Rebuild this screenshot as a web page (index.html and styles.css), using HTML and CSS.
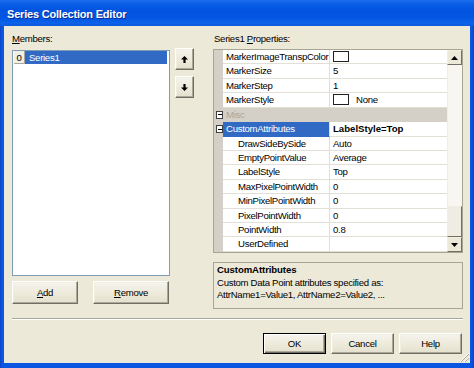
FILE: index.html
```html
<!DOCTYPE html>
<html>
<head>
<meta charset="utf-8">
<link rel="stylesheet" href="styles.css">
</head>
<body>
<div class="window">
  <div class="titlebar">Series Collection Editor</div>
  <div class="client">
    <div class="main">
      <div class="col-left">
        <div class="label"><u>M</u>embers:</div>
        <div class="list">
          <div class="list-row"><span class="idx">0</span><span class="item sel">Series1</span></div>
        </div>
        <div class="left-buttons">
          <button class="btn btn-add"><u>A</u>dd</button>
          <button class="btn btn-remove"><u>R</u>emove</button>
        </div>
      </div>
      <div class="col-arrows">
        <button class="btn arrow"><svg width="7" height="7" viewBox="0 0 7 7"><path d="M3.5 0 L7 3.5 H4.6 V7 H2.4 V3.5 H0 Z" fill="#000"/></svg></button>
        <button class="btn arrow"><svg width="7" height="7" viewBox="0 0 7 7"><path d="M3.5 7 L7 3.5 H4.6 V0 H2.4 V3.5 H0 Z" fill="#000"/></svg></button>
      </div>
      <div class="col-right">
        <div class="label label-right">Series1 <u>P</u>roperties:</div>
        <div class="pgrid">
          <div class="pg-rows">
            <div class="pg-row"><span class="pg-m"></span><span class="pg-n">MarkerImageTranspColor</span><span class="pg-v"><i class="swatch"></i></span></div>
            <div class="pg-row"><span class="pg-m"></span><span class="pg-n">MarkerSize</span><span class="pg-v">5</span></div>
            <div class="pg-row"><span class="pg-m"></span><span class="pg-n">MarkerStep</span><span class="pg-v">1</span></div>
            <div class="pg-row"><span class="pg-m"></span><span class="pg-n">MarkerStyle</span><span class="pg-v"><i class="swatch"></i><span class="after-swatch">None</span></span></div>
            <div class="pg-row pg-cat"><span class="pg-m"><i class="minus"></i></span><span class="pg-c">Misc</span></div>
            <div class="pg-row"><span class="pg-m"><i class="minus"></i></span><span class="pg-n pg-sel">CustomAttributes</span><span class="pg-v pg-bold">LabelStyle=Top</span></div>
            <div class="pg-row"><span class="pg-m"></span><span class="pg-n pg-child">DrawSideBySide</span><span class="pg-v">Auto</span></div>
            <div class="pg-row"><span class="pg-m"></span><span class="pg-n pg-child">EmptyPointValue</span><span class="pg-v">Average</span></div>
            <div class="pg-row"><span class="pg-m"></span><span class="pg-n pg-child">LabelStyle</span><span class="pg-v">Top</span></div>
            <div class="pg-row"><span class="pg-m"></span><span class="pg-n pg-child">MaxPixelPointWidth</span><span class="pg-v">0</span></div>
            <div class="pg-row"><span class="pg-m"></span><span class="pg-n pg-child">MinPixelPointWidth</span><span class="pg-v">0</span></div>
            <div class="pg-row"><span class="pg-m"></span><span class="pg-n pg-child">PixelPointWidth</span><span class="pg-v">0</span></div>
            <div class="pg-row"><span class="pg-m"></span><span class="pg-n pg-child">PointWidth</span><span class="pg-v">0.8</span></div>
            <div class="pg-row"><span class="pg-m"></span><span class="pg-n pg-child">UserDefined</span><span class="pg-v"></span></div>
          </div>
          <div class="vscroll">
            <div class="sb-btn"><svg width="7" height="4" viewBox="0 0 7 4"><path d="M3.5 0 L7 4 H0 Z" fill="#000"/></svg></div>
            <div class="sb-track"></div>
            <div class="sb-thumb"></div>
            <div class="sb-btn"><svg width="7" height="4" viewBox="0 0 7 4"><path d="M0 0 H7 L3.5 4 Z" fill="#000"/></svg></div>
          </div>
        </div>
        <div class="desc">
          <div class="desc-title">CustomAttributes</div>
          <div class="desc-text">Custom Data Point attributes specified as:<br>AttrName1=Value1, AttrName2=Value2, ...</div>
        </div>
      </div>
    </div>
    <div class="separator"></div>
    <div class="footer">
      <button class="btn btn-foot btn-default">OK</button>
      <button class="btn btn-foot">Cancel</button>
      <button class="btn btn-foot">Help</button>
    </div>
    <svg class="grip" width="11" height="11" viewBox="0 0 11 11">
      <path d="M10 1 L1 10 M10 5 L5 10 M10 9 L9 10" stroke="#fff" stroke-width="1"/>
      <path d="M10 2 L2 10 M10 6 L6 10" stroke="#ACA899" stroke-width="1"/>
    </svg>
  </div>
</div>
</body>
</html>
```

FILE: styles.css
```css
html, body {
  margin: 0;
  padding: 0;
}
body {
  width: 474px;
  height: 368px;
  overflow: hidden;
  font-family: "Liberation Sans", Arial, sans-serif;
  font-size: 9.6px;
  letter-spacing: -0.3px;
  color: #000;
}
.window {
  width: 474px;
  height: 368px;
  display: flex;
  flex-direction: column;
  background: linear-gradient(to right, #0A45C8 0, #0B56E0 2px, #0B56E0 471px, #0A45C8 474px);
}
.titlebar {
  height: 26px;
  box-sizing: border-box;
  padding: 2px 0 0 7px;
  line-height: 24px;
  color: #fff;
  font-size: 11px;
  font-weight: bold;
  letter-spacing: -0.2px;
  text-shadow: 1px 1px 0 #0A2A9A;
  background: linear-gradient(to bottom, #1E6EEE 0, #0A5EE6 4px, #0254E0 10px, #0356E2 18px, #0B62EA 23px, #0D5ADB 26px);
}
.client {
  position: relative;
  margin: 0 4px 5px 4px;
  flex: 1;
  background: #ECE9D8;
  padding: 6px 7px 0 8px;
  display: flex;
  flex-direction: column;
}
.main {
  display: flex;
  height: 277px;
}
.label {
  height: 18px;
  line-height: 14px;
}
.label-right {
  height: 17px;
  padding-left: 1px;
}
.col-left {
  width: 158px;
  display: flex;
  flex-direction: column;
}
.list {
  height: 226px;
  box-sizing: border-box;
  border: 1px solid #7F9DB9;
  background: #fff;
  padding: 0 2px 0 1px;
}
.list-row {
  display: flex;
  height: 13px;
}
.idx {
  width: 11px;
  box-sizing: border-box;
  background: #F1EFE2;
  border-right: 1px solid #ACA899;
  border-bottom: 1px solid #ACA899;
  text-align: center;
  line-height: 13px;
}
.item {
  flex: 1;
  padding-left: 4px;
  line-height: 13px;
}
.sel {
  background: #316AC5;
  color: #fff;
}
.left-buttons {
  display: flex;
  justify-content: space-between;
  margin-top: 5px;
  padding-right: 1px;
}
.btn {
  font-family: "Liberation Sans", Arial, sans-serif;
  font-size: 9.6px;
  letter-spacing: -0.3px;
  color: #000;
  margin: 0;
  padding: 0;
  box-sizing: border-box;
  border: 1px solid;
  border-color: #fff #716F64 #716F64 #fff;
  box-shadow: inset -1px -1px 0 #ACA899, inset 1px 1px 0 #F1EFE2;
  background: linear-gradient(#F5F4EE, #ECE9D8 60%, #E3E0CF);
}
.btn-add {
  width: 66px;
  height: 23px;
}
.btn-remove {
  width: 76px;
  height: 23px;
}
.col-arrows {
  width: 19px;
  margin-left: 5px;
  padding-top: 16px;
  display: flex;
  flex-direction: column;
  gap: 6px;
}
.arrow {
  width: 19px;
  height: 22px;
  display: flex;
  align-items: center;
  justify-content: center;
}
.col-right {
  width: 250px;
  margin-left: 19px;
  display: flex;
  flex-direction: column;
}
.pgrid {
  height: 204px;
  box-sizing: border-box;
  border: 1px solid #A9A594;
  background: #fff;
  display: flex;
  overflow: hidden;
}
.pg-rows {
  width: 233px;
  background: linear-gradient(to right, #D4D0C8 9px, #fff 9px);
}
.pg-row {
  height: 14.43px;
  display: grid;
  grid-template-columns: 9px 107px 117px;
}
.pg-m {
  display: flex;
  align-items: center;
  justify-content: center;
}
.pg-n, .pg-v, .pg-c {
  box-sizing: border-box;
  border-bottom: 1px solid #E2E0D6;
  white-space: nowrap;
  overflow: hidden;
  line-height: 13.4px;
}
.pg-n {
  border-right: 1px solid #E2E0D6;
  padding-left: 3px;
}
.pg-v {
  padding-left: 3px;
  display: flex;
  align-items: center;
}
.pg-child {
  padding-left: 15px;
}
.pg-sel {
  background: #316AC5;
  color: #fff;
  border-bottom-color: #316AC5;
}
.pg-bold {
  font-weight: bold;
  letter-spacing: 0;
}
.pg-cat {
  background: #D4D0C8;
}
.pg-c {
  grid-column: 2 / 4;
  padding-left: 3px;
  color: #A9A69A;
  border-bottom-color: #D4D0C8;
}
.minus {
  display: block;
  width: 8px;
  height: 8px;
  box-sizing: border-box;
  border: 1px solid #404040;
  background: #fff linear-gradient(#000, #000) center / 4px 1px no-repeat;
  margin-left: 2px;
}
.swatch {
  display: inline-block;
  width: 16px;
  height: 11px;
  box-sizing: border-box;
  border: 1px solid #202020;
  background: #fff;
}
.after-swatch {
  margin-left: 7px;
}
.vscroll {
  width: 15px;
  display: flex;
  flex-direction: column;
}
.sb-btn {
  height: 15px;
  box-sizing: border-box;
  border: 1px solid;
  border-color: #F1EFE2 #716F64 #716F64 #F1EFE2;
  background: #ECE9D8;
  display: flex;
  align-items: center;
  justify-content: center;
}
.sb-track {
  flex: 1;
  background: #F7F6F1;
  border-left: 1px solid #EFEDE4;
}
.sb-thumb {
  height: 31px;
  box-sizing: border-box;
  border: 1px solid;
  border-color: #F1EFE2 #716F64 #716F64 #F1EFE2;
  background: #EEECE3;
}
.desc {
  margin-top: 9px;
  height: 47px;
  box-sizing: border-box;
  border: 1px solid #A9A594;
  padding: 1px 3px;
  line-height: 12px;
}
.desc-title {
  font-weight: bold;
  letter-spacing: -0.1px;
  margin-bottom: 1px;
}
.separator {
  margin-top: 9px;
  height: 1px;
  border-top: 1px solid #ACA899;
  background: #fff;
}
.footer {
  display: flex;
  justify-content: flex-end;
  gap: 5px;
  margin-top: 13px;
  padding-right: 1px;
}
.btn-foot {
  width: 63px;
  height: 21px;
}
.btn-default {
  border: 1px solid #000;
  box-shadow: inset 1px 1px 0 #fff, inset -1px -1px 0 #716F64, inset -2px -2px 0 #ACA899;
}
.grip {
  position: absolute;
  right: 0;
  bottom: 0;
}
```
